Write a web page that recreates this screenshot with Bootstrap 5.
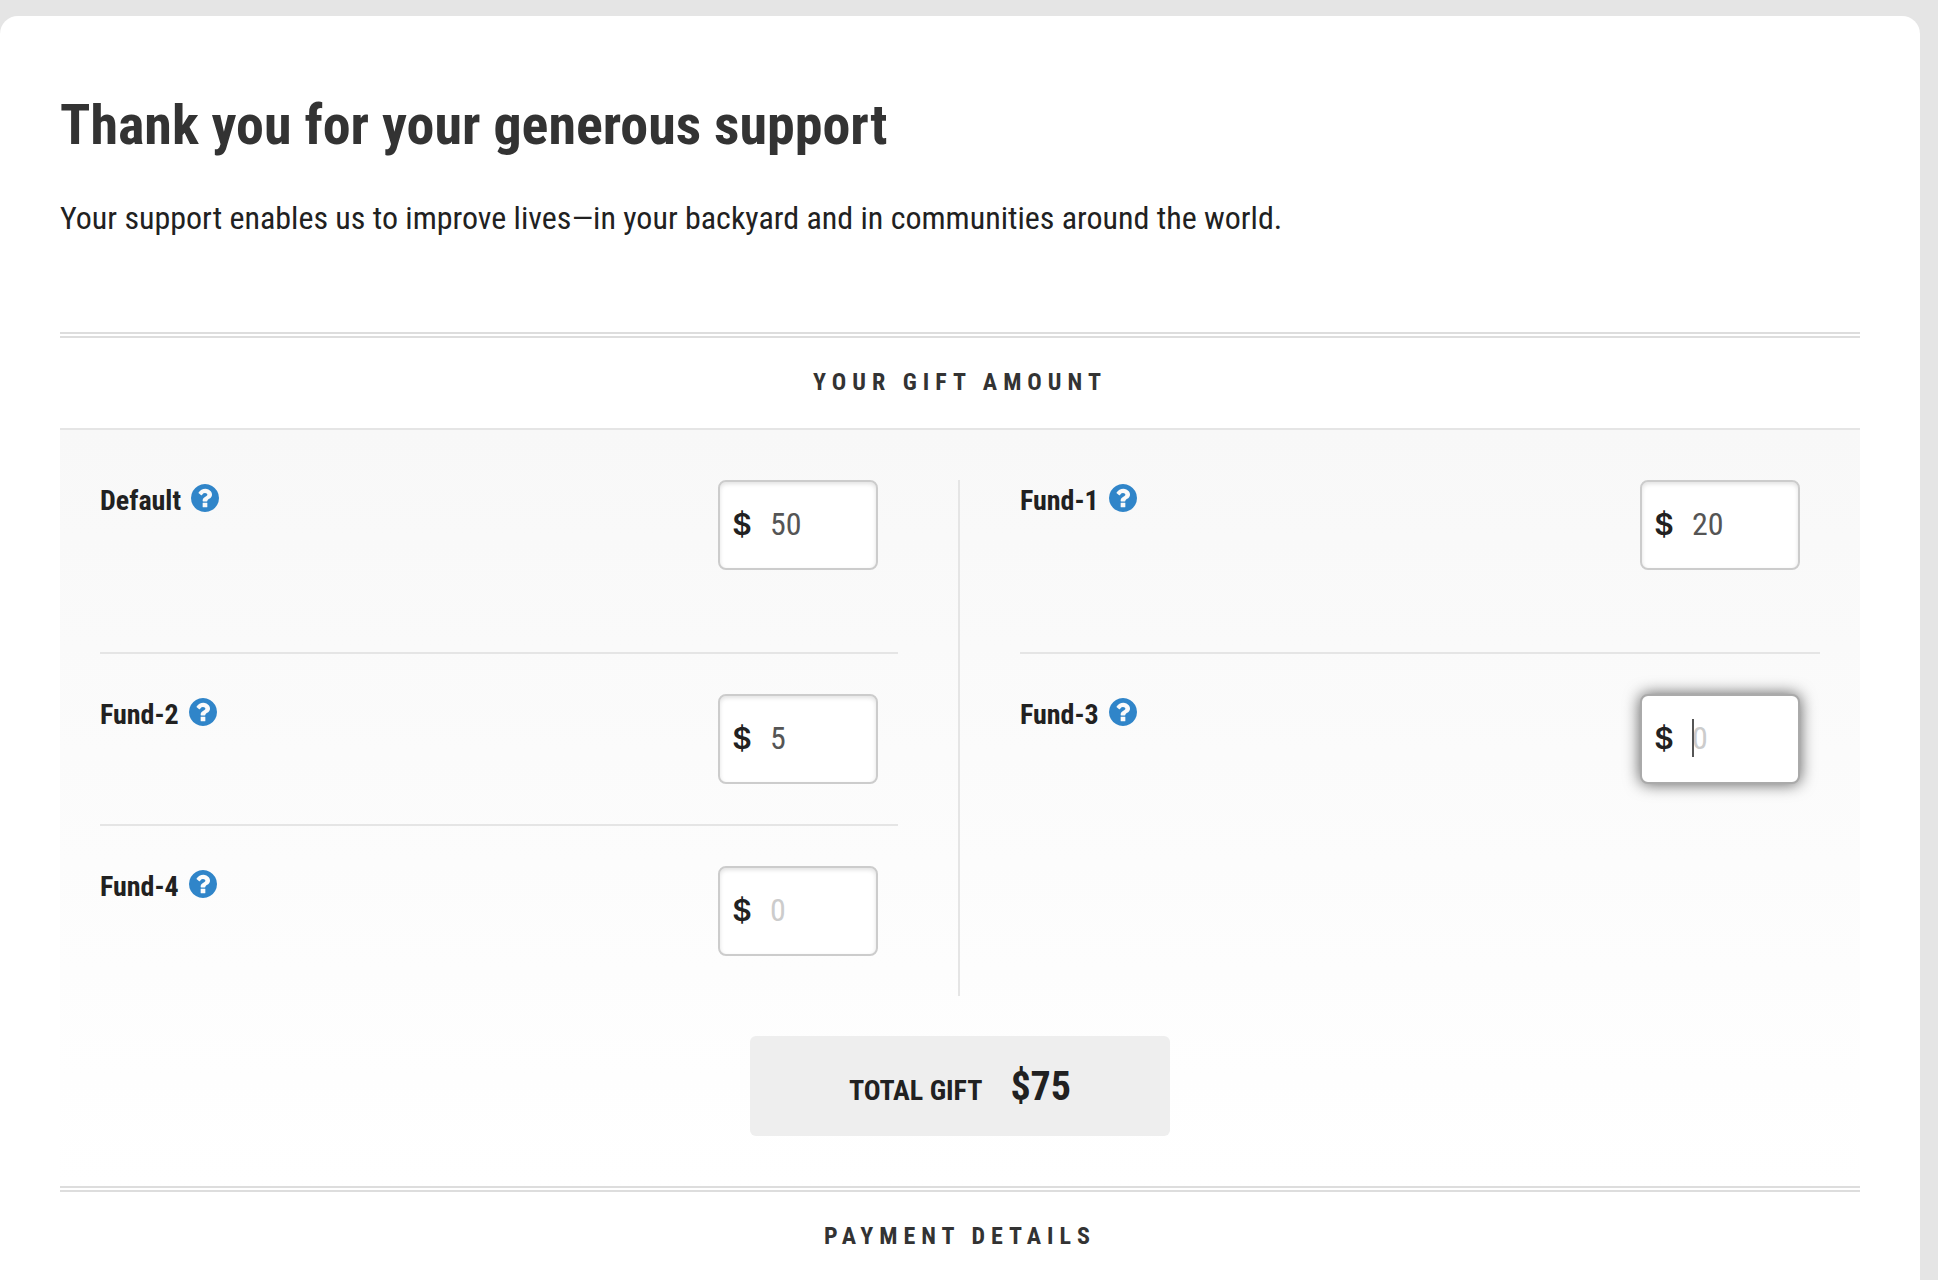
<!DOCTYPE html>
<html lang="en">
<head>
<meta charset="utf-8">
<meta name="viewport" content="width=device-width, initial-scale=1">
<title>Thank you for your generous support</title>
<link href="https://cdn.jsdelivr.net/npm/bootstrap@5.3.0/dist/css/bootstrap.min.css" rel="stylesheet">
<style>
body { background: #e5e5e5; color: #212121; font-family: "Roboto Condensed", "Liberation Sans Narrow", Roboto, sans-serif; font-size: 32px; line-height: 40px; }
.sheet { background: #fff; border-radius: 18px 18px 0 0; margin: 16px 18px 0 0; padding: 76px 60px 60px; min-height: calc(100vh - 16px); }
.sheet h1 { color: #333; font-size: 56px; line-height: 66px; font-weight: 700; margin: 0 0 32px; }
.intro { margin: 0 0 86px; line-height: 56px; }
.section-title { border-top: 6px double #ddd; color: #333; font-size: 24px; line-height: 30px; font-weight: 700; letter-spacing: 6px; padding: 29px 0 31px; margin: 0; text-align: center; text-transform: uppercase; }
.panel { border-top: 2px solid #e5e5e5; background: linear-gradient(#f8f8f8, #fff); padding: 50px 0; }
.fund-col { padding: 0 40px 0 60px; }
.fund-col:first-child { border-right: 2px solid #e5e5e5; padding: 0 60px 0 40px; }
.fund { padding: 40px 20px 40px 0; border-bottom: 2px solid #e5e5e5; }
.fund:first-child { padding-top: 0; min-height: 174px; }
.fund:last-child { border-bottom: 0; }
.fund label { font-size: 28px; line-height: 42px; font-weight: 700; }
.help { width: 28px; height: 28px; margin: 4px 0 0 10px; }
.help svg { display: block; }
.amount { width: 160px; height: 90px; background: #fff; border: 2px solid #ccc; border-radius: 8px; box-shadow: inset 0 2px 4px rgba(0,0,0,.12); padding: 0 12px 2px; }
.amount.active { border-color: #aaa; box-shadow: 0 0 16px rgba(0,0,0,.65); }
.amount span { font-family: Inter, "Liberation Sans", sans-serif; font-size: 30px; font-weight: 600; width: 20px; text-align: center; }
.amount input { color: #555; font-size: 32px; line-height: 40px; margin-left: 18px; min-width: 0; outline: 0; }
.amount input::placeholder { color: #ccc; opacity: 1; }
.amount-field { flex: 1; }
.caret { position: absolute; left: 18px; top: 1px; width: 2px; height: 38px; background: #555; }
.total { background: #eee; border-radius: 6px; width: 420px; height: 100px; margin: 40px auto 0; padding-top: 6px; font-size: 28px; font-weight: 700; }
.total output { font-size: 40px; margin-left: 28px; }
</style>
</head>
<body>
<svg class="d-none" xmlns="http://www.w3.org/2000/svg">
  <symbol id="question" viewBox="0 0 1536 1536"><path fill="#3085c9" d="M896 1248v-192q0-14-9-23t-23-9H672q-14 0-23 9t-9 23v192q0 14 9 23t23 9h192q14 0 23-9t9-23zm256-672q0-88-55.500-163T958 297t-170-41q-243 0-371 213-15 24 8 42l132 100q7 6 19 6 16 0 25-12 53-68 86-92 34-24 86-24 48 0 85.500 26t37.500 59q0 38-20 61t-68 45q-63 28-115.500 86.500T640 892v36q0 14 9 23t23 9h192q14 0 23-9t9-23q0-19 21.500-49.500T972 829q32-18 49-28.500t46-35 44.500-48 28-60.500 12.500-81zm384 192q0 209-103 385.500T1153.500 1433 768 1536t-385.500-103T103 1153.500 0 768t103-385.500T382.500 103 768 0t385.500 103T1433 382.500 1536 768z"/></symbol>
</svg>
<main class="sheet">
  <h1>Thank you for your generous support</h1>
  <p class="intro">Your support enables us to improve lives—in your backyard and in communities around the world.</p>
  <form>
    <h2 class="section-title">Your gift amount</h2>
    <section class="panel">
      <div class="row g-0">
        <div class="col-6 fund-col">
          <div class="fund d-flex align-items-start">
            <label for="f0">Default</label>
            <button type="button" class="help btn p-0 border-0" aria-label="About Default"><svg width="28" height="28"><use href="#question"/></svg></button>
            <div class="amount d-flex align-items-center ms-auto"><span>$</span><div class="amount-field position-relative d-flex"><input id="f0" class="border-0 bg-transparent p-0 w-100" type="text" value="50" placeholder="0"></div></div>
          </div>
          <div class="fund d-flex align-items-start">
            <label for="f2">Fund-2</label>
            <button type="button" class="help btn p-0 border-0" aria-label="About Fund-2"><svg width="28" height="28"><use href="#question"/></svg></button>
            <div class="amount d-flex align-items-center ms-auto"><span>$</span><div class="amount-field position-relative d-flex"><input id="f2" class="border-0 bg-transparent p-0 w-100" type="text" value="5" placeholder="0"></div></div>
          </div>
          <div class="fund d-flex align-items-start">
            <label for="f4">Fund-4</label>
            <button type="button" class="help btn p-0 border-0" aria-label="About Fund-4"><svg width="28" height="28"><use href="#question"/></svg></button>
            <div class="amount d-flex align-items-center ms-auto"><span>$</span><div class="amount-field position-relative d-flex"><input id="f4" class="border-0 bg-transparent p-0 w-100" type="text" placeholder="0"></div></div>
          </div>
        </div>
        <div class="col-6 fund-col">
          <div class="fund d-flex align-items-start">
            <label for="f1">Fund-1</label>
            <button type="button" class="help btn p-0 border-0" aria-label="About Fund-1"><svg width="28" height="28"><use href="#question"/></svg></button>
            <div class="amount d-flex align-items-center ms-auto"><span>$</span><div class="amount-field position-relative d-flex"><input id="f1" class="border-0 bg-transparent p-0 w-100" type="text" value="20" placeholder="0"></div></div>
          </div>
          <div class="fund d-flex align-items-start">
            <label for="f3">Fund-3</label>
            <button type="button" class="help btn p-0 border-0" aria-label="About Fund-3"><svg width="28" height="28"><use href="#question"/></svg></button>
            <div class="amount active d-flex align-items-center ms-auto"><span>$</span><div class="amount-field position-relative d-flex"><input id="f3" class="border-0 bg-transparent p-0 w-100" type="text" placeholder="0"><i class="caret"></i></div></div>
          </div>
        </div>
      </div>
      <div class="total d-flex align-items-center justify-content-center"><div><label for="sum">TOTAL GIFT</label><output id="sum">$75</output></div></div>
    </section>
    <h2 class="section-title">Payment details</h2>
  </form>
</main>
<script src="https://cdn.jsdelivr.net/npm/bootstrap@5.3.0/dist/js/bootstrap.bundle.min.js"></script>
</body>
</html>
